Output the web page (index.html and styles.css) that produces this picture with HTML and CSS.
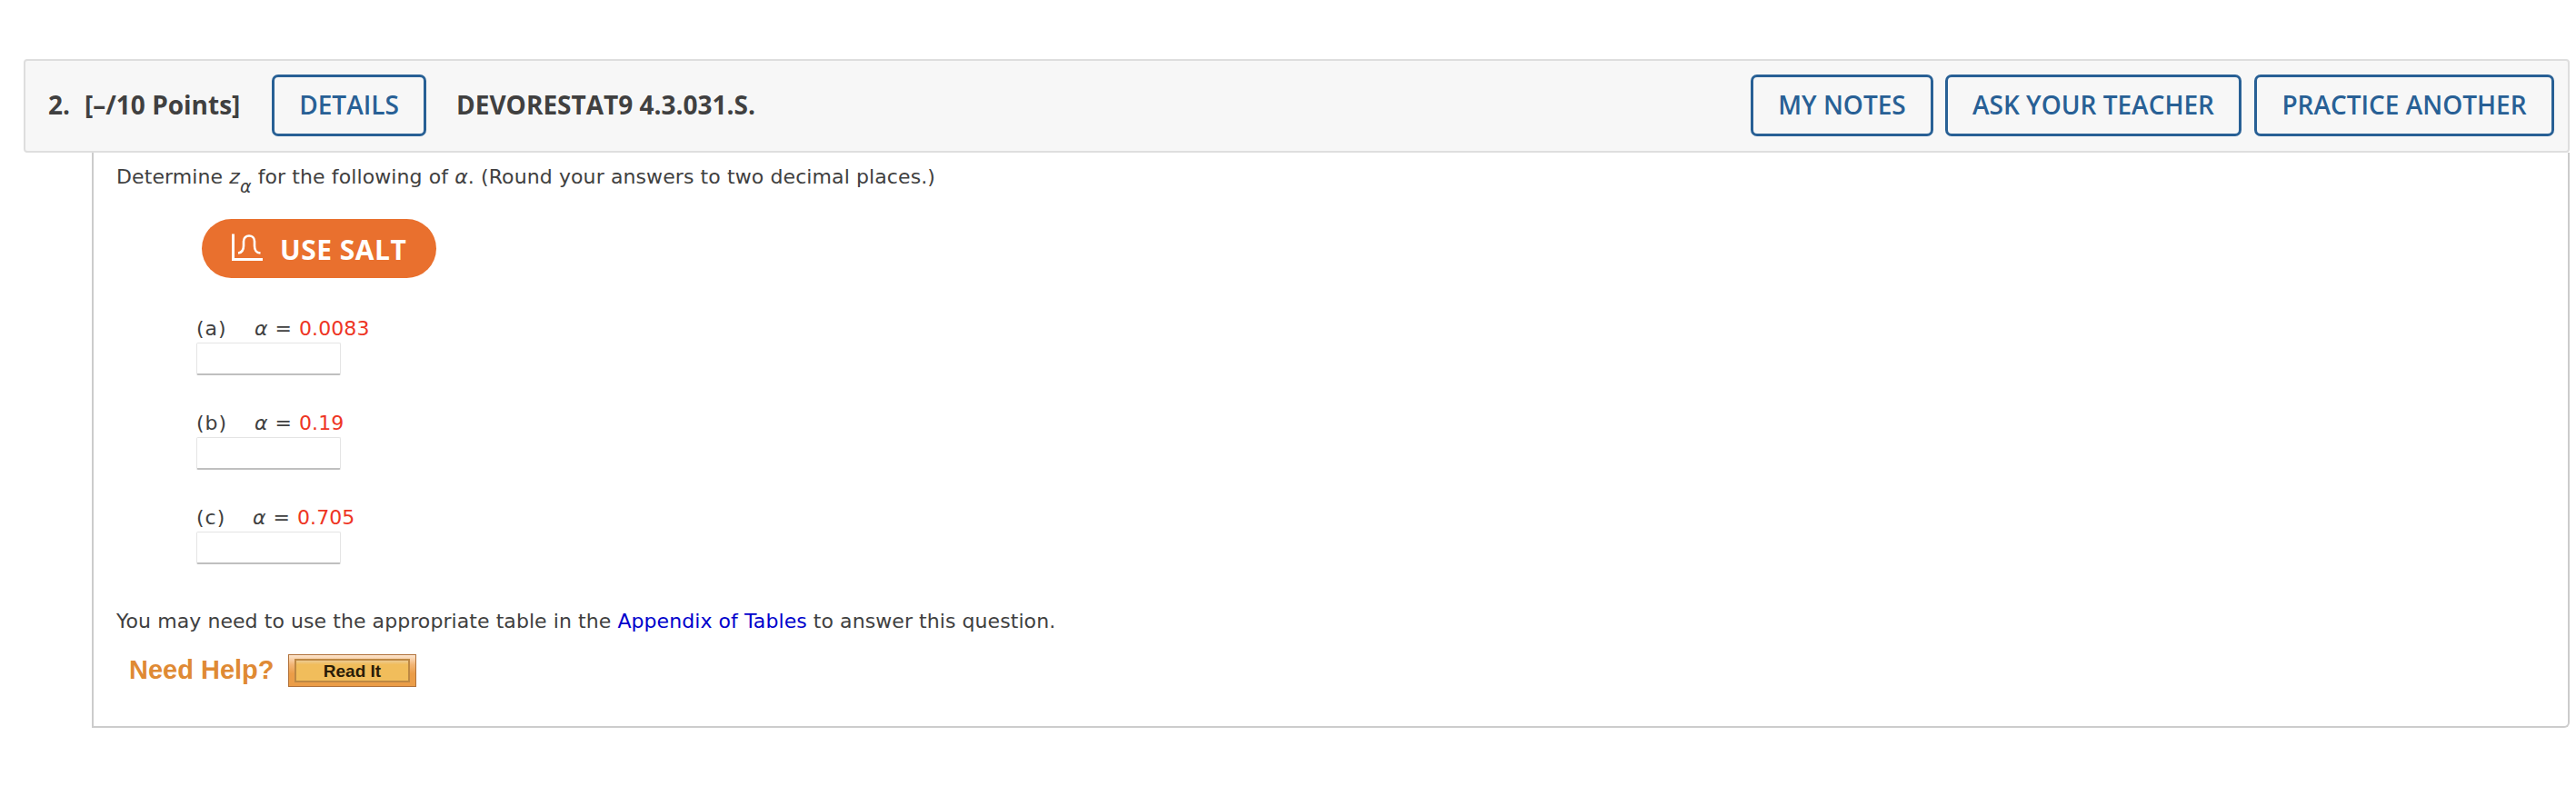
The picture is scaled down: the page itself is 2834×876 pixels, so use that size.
FILE: index.html
```html
<!DOCTYPE html>
<html lang="en">
<head>
    <meta charset="UTF-8">
    <title>Question 2</title>
    <link rel="stylesheet" href="styles.css">
</head>
<body>
    <div class="question">
        <div class="header">
            <span class="number">2.</span>
            <span class="points">[–/10 Points]</span>
            <button class="btn details">DETAILS</button>
            <span class="source">DEVORESTAT9 4.3.031.S.</span>
            <div class="actions">
                <button class="btn notes">MY NOTES</button>
                <button class="btn ask">ASK YOUR TEACHER</button>
                <button class="btn practice">PRACTICE ANOTHER</button>
            </div>
        </div>
        <div class="content">
            <p class="prompt">Determine <i>z</i><sub>α</sub> for the following of <i>α</i>. (Round your answers to two decimal places.)</p>
            <button class="salt">
                <svg class="salt-icon" width="36" height="33" viewBox="0 0 36 33" fill="none" stroke="#fff" stroke-width="3">
                    <path d="M2.500 0.500V28.500H35"/>
                    <path d="M8 21.500C12.500 21 14 18.500 14 13.500V8.500C14 0.500 26 0.500 26 8.500V13.500C26 18.500 27.500 21 32.500 21.500" stroke-width="2.600"/>
                </svg>
                <span class="salt-text">USE SALT</span>
            </button>
            <div class="part">
                <label for="a"><span class="letter">(a)</span><i>α</i><span class="eq">=</span><span class="value">0.0083</span></label>
                <input type="text" id="a">
            </div>
            <div class="part">
                <label for="b"><span class="letter">(b)</span><i>α</i><span class="eq">=</span><span class="value">0.19</span></label>
                <input type="text" id="b">
            </div>
            <div class="part part-c">
                <label for="c"><span class="letter">(c)</span><i>α</i><span class="eq">=</span><span class="value">0.705</span></label>
                <input type="text" id="c">
            </div>
            <p class="note">You may need to use the appropriate table in the <a href="#">Appendix of Tables</a> to answer this question.</p>
            <div class="help">
                <span class="help-label">Need Help?</span>
                <button class="read-it"><span>Read It</span></button>
            </div>
        </div>
    </div>
</body>
</html>
```
FILE: styles.css
```css
* {
    box-sizing: border-box;
}
body {
    margin: 0;
    background-color: #fff;
    color: #404040;
    font-family: "DejaVu Sans", Verdana, sans-serif;
    font-size: 22px;
}
p {
    margin: 0;
}
button {
    cursor: pointer;
}
.question {
    padding: 65px 7px 0 26px;
}
.header {
    display: flex;
    align-items: center;
    height: 103px;
    padding: 0 15px 1px 25px;
    background-color: #f7f7f7;
    border: 2px solid #dedede;
    border-radius: 4px;
    font-family: "Open Sans", sans-serif;
    font-size: 28px;
    font-weight: bold;
    white-space: nowrap;
}
.number, .points, .source {
    padding-bottom: 2px;
}
.number {
    width: 40px;
}
.points {
    width: 206px;
}
.source {
    margin-left: 33px;
}
.btn {
    height: 68px;
    padding: 0 0 2px;
    background-color: transparent;
    border: 3px solid #286095;
    border-radius: 7px;
    color: #286095;
    font-family: "Open Sans", sans-serif;
    font-size: 28px;
    font-weight: 600;
}
.details {
    width: 170px;
}
.actions {
    display: flex;
    gap: 13px;
    margin-left: auto;
}
.notes {
    width: 201px;
}
.ask {
    width: 326px;
}
.practice {
    width: 330px;
    margin-left: 1px;
}
.content {
    height: 633px;
    margin-left: 75px;
    padding: 12px 24px 0 25px;
    border: 2px solid #ccc;
    border-top: 0;
    border-radius: 0 0 6px 0;
}
.prompt, .note {
    height: 30px;
    line-height: 30px;
    white-space: nowrap;
}
.prompt {
    letter-spacing: 0.1px;
}
.note {
    margin-top: 11px;
    letter-spacing: 0.07px;
}
.note a {
    color: #0000cc;
    text-decoration: none;
}
sub {
    font-size: 19px;
    font-style: italic;
    line-height: 0;
    vertical-align: -10px;
}
.salt {
    display: flex;
    align-items: center;
    width: 258px;
    height: 65px;
    margin: 31px 0 41px 94px;
    padding: 0 0 0 32px;
    background-color: #e9702e;
    border: 0;
    border-radius: 33px;
    color: #fff;
    font-family: "Open Sans", sans-serif;
    font-size: 30px;
    font-weight: bold;
}
.salt-icon {
    margin-right: 18px;
}
.salt-text {
    padding-top: 1px;
    letter-spacing: 0.5px;
}
.part {
    height: 104px;
    margin-left: 88px;
}
.part label {
    display: flex;
    height: 30px;
    line-height: 29px;
}
.letter {
    width: 64px;
    letter-spacing: 1px;
}
.part-c .letter {
    width: 62px;
}
.eq {
    margin: 0 8px;
}
.value {
    color: #ee3524;
    letter-spacing: 0.1px;
}
.part input {
    display: block;
    width: 159px;
    height: 36px;
    border: 1px solid #e4e4e4;
    border-bottom: 2px solid #bfbfbf;
    border-radius: 2px;
}
.note {
    margin-top: 10px;
}
.help {
    display: flex;
    align-items: center;
    margin: 21px 0 0 14px;
    font-family: "Liberation Sans", Arial, sans-serif;
    font-weight: bold;
}
.help-label {
    width: 175px;
    color: #df8a34;
    font-size: 29px;
    line-height: 34px;
    padding-bottom: 2px;
}
.read-it {
    width: 141px;
    height: 36px;
    padding: 4px 6px;
    background: linear-gradient(#fde6cf, #f2b576 30%, #eb9d48 60%);
    border: 1px solid #b0713a;
    color: #2a1c08;
    font-family: inherit;
    font-size: 19px;
    font-weight: bold;
}
.read-it span {
    display: block;
    height: 26px;
    background: linear-gradient(#ecca90, #f1bd5b 20%);
    border: 2px solid #bd8843;
    line-height: 24px;
}
```
